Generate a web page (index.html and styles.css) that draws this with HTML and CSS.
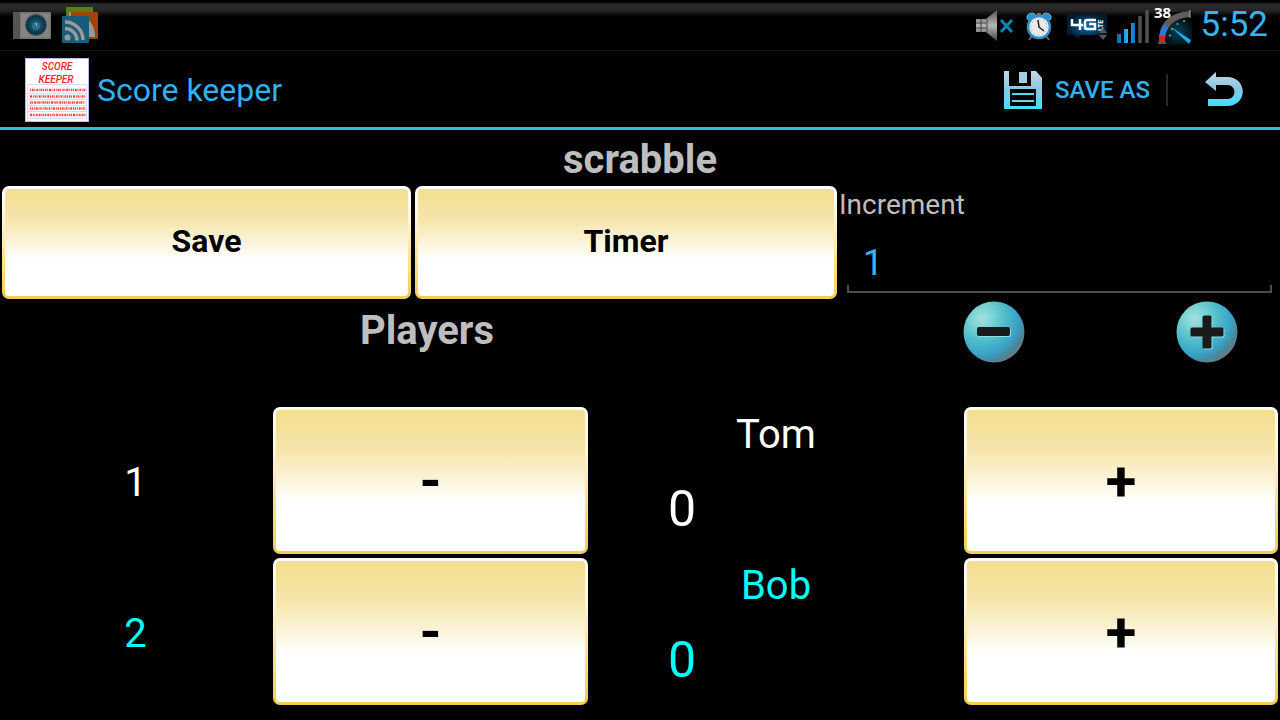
FILE: index.html
```html
<!DOCTYPE html>
<html lang="en">
<head>
<meta charset="utf-8">
<title>Score keeper</title>
<link rel="stylesheet" href="styles.css">
</head>
<body>
<svg class="defs" width="0" height="0" aria-hidden="true">
  <defs>
    <linearGradient id="ice" x1="0" y1="0" x2="0" y2="1"><stop offset="0" stop-color="#c3d7e6"/><stop offset=".45" stop-color="#8fc6e2"/><stop offset="1" stop-color="#3fe0ff"/></linearGradient>
    <linearGradient id="metal" x1="0" y1="0" x2="0" y2="1"><stop offset="0" stop-color="#555"/><stop offset=".5" stop-color="#b5b5b5"/><stop offset="1" stop-color="#444"/></linearGradient>
    <radialGradient id="lens"><stop offset="0" stop-color="#3b8296"/><stop offset=".45" stop-color="#135068"/><stop offset="1" stop-color="#0a2e3e"/></radialGradient>
    <radialGradient id="glow"><stop offset="0" stop-color="#0a70b8"/><stop offset="1" stop-color="#021a2c"/></radialGradient>
    <radialGradient id="haze" cx=".6" cy=".6" r=".55"><stop offset="0" stop-color="#02435a"/><stop offset="1" stop-color="#000"/></radialGradient>
    <linearGradient id="bar" x1="0" y1="0" x2="1" y2="0"><stop offset="0" stop-color="#0b66a8"/><stop offset=".6" stop-color="#2fb2ff"/><stop offset="1" stop-color="#0d6fb8"/></linearGradient>
    <radialGradient id="ball" cx=".3" cy=".27" r=".85"><stop offset="0" stop-color="#a4e0df"/><stop offset=".25" stop-color="#74d0d2"/><stop offset=".45" stop-color="#4fbdca"/><stop offset=".7" stop-color="#38a3c8"/><stop offset=".85" stop-color="#4d8497"/><stop offset="1" stop-color="#777"/></radialGradient>
  </defs>
</svg>

<header>
  <div class="status">
    <svg width="100" height="50" viewBox="0 0 100 50" role="img" aria-label="Notifications">
      <rect x="13" y="12" width="38" height="27" rx="1" fill="#777"/>
      <path d="M13 12h5v27h-5z" fill="#555"/><path d="M19 12v27" stroke="#333"/>
      <rect x="21" y="14" width="28" height="23" fill="#858585"/>
      <circle cx="36" cy="25" r="11" fill="#456"/><circle cx="36" cy="25" r="10" fill="url(#lens)"/>
      <circle cx="36" cy="26" r="4" fill="#2a6f83"/><path d="M35 23l2 0v4z" fill="#9bc"/>
      <rect x="66" y="7" width="27" height="22" rx="1" fill="#5c7d10"/>
      <rect x="69" y="12" width="29" height="27" rx="1" fill="#a24205"/>
      <path d="M70 12v6M89 22q5 6 5 14h-5z" stroke="#999" stroke-width="2" fill="#999"/>
      <rect x="62" y="16" width="27" height="27" rx="1" fill="#195b7b"/>
      <circle cx="67.500" cy="37.500" r="3" fill="#999"/>
      <path d="M65 28.500a12 12 0 0 1 12 12M65 22a18 18 0 0 1 18 18" fill="none" stroke="#999" stroke-width="3.500"/>
    </svg>
    <div class="tray">
      <svg width="225" height="50" viewBox="970 0 225 50" role="img" aria-label="Muted, alarm set, 4G LTE, signal, battery 38">
        <path d="M976 19h10l11-9v31l-11-9h-10z" fill="url(#metal)"/>
        <path d="M976 23h10m-10 5h10M981 19v13M987 19v13" stroke="#444"/>
        <path d="M1001 20l11 12m0-12l-11 12" stroke="#0b86b4" stroke-width="3"/>
        <path d="M1032 36l-3 4m17-4l3 4" stroke="#666" stroke-width="2"/>
        <path d="M1027 19q-1-6 6-6l3 2-6 6zM1051 19q1-6-6-6l-3 2 6 6z" fill="#2491d1" stroke="#9cd" stroke-width=".7"/>
        <path d="M1037 13h4v3h-4z" fill="#777"/>
        <circle cx="1039" cy="27" r="11" fill="#e9e9e9" stroke="#3191ca" stroke-width="2.500"/>
        <circle cx="1039" cy="27" r="8" fill="none" stroke="#999" stroke-dasharray="1 3.190"/>
        <path d="M1038 20l1 7 5 4" fill="none" stroke="#222" stroke-width="1.500"/>
        <path d="M1067 14h40v21h-26l-5 4-1-4h-8z" fill="url(#glow)"/>
        <path d="M1072 19v6h11m-3-6v11M1096 20h-9q-2 0-2 2v5q0 2 2 2h8v-5h-6" fill="none" stroke="#fff" stroke-width="2.500"/>
        <text class="lte" transform="translate(1103 31) rotate(-90)">LTE</text>
        <path d="M1099 33l4-5 4 5zm0 2h8l-4 5z" fill="#585858"/>
        <path d="M1117 34h4v9h-4zM1124 29h4v14h-4zM1131 23h4v20h-4z" fill="url(#bar)"/>
        <path d="M1138 16h4v27h-4zM1145 10h4v33h-4z" fill="#3d3d3d"/>
        <path d="M1140 16v27M1147 10v33" stroke="#666"/>
        <rect x="1157" y="12" width="35" height="33" fill="url(#haze)"/>
        <path d="M1162 42q0-26 28-28" fill="none" stroke="#625d5b" stroke-width="6"/>
        <path d="M1162 36q1-6 4-10" fill="none" stroke="#287bd7" stroke-width="6"/>
        <path d="M1162 42v-6" stroke="#da2020" stroke-width="6"/>
        <path d="M1158 43h8M1190 10v8" stroke="#aaa"/>
        <path d="M1169 35l2 1m0-8l2 2m4-7l1 2m6-5v2" stroke="#777" stroke-width="2"/>
        <path d="M1171 27l20 13-2 4z" fill="#15adf6"/>
        <text class="charge" x="1154" y="18">38</text>
      </svg>
      <time class="clock">5:52</time>
    </div>
  </div>
  <div class="actionbar">
    <svg width="64" height="64" viewBox="0 0 64 64" role="img" aria-label="Score keeper logo">
      <rect x=".5" y=".5" width="63" height="63" fill="#fff" stroke="#b9b4f0"/>
      <g class="logo-title"><text x="32" y="12">SCORE</text><text x="31" y="25">KEEPER</text></g>
      <path d="M2.500 64V26.500h59V64M2 35.500h60M2 41.500h60M2 47.500h60M2 53.500h60M2 60.500h60" fill="none" stroke="#dcd9fa"/>
      <g fill="none" stroke="#f44" stroke-width="2.400">
        <path d="M5 32h56" stroke-dasharray="1 .8 2 .6 1 1 1.500 .7"/>
        <path d="M5 38.500h56" stroke-dasharray="2 .7 1 .8 1.500 .6 1 1"/>
        <path d="M5 44.500h55" stroke-dasharray="1.500 .6 1 1 2 .7 1 .6"/>
        <path d="M5 50.500h56" stroke-dasharray="1 .6 1.500 1 1 .7 2 .8"/>
        <path d="M5 57h56" stroke-dasharray="2 .8 1 .6 1 .7 1.500 1"/>
      </g>
    </svg>
    <h1>Score keeper</h1>
    <button class="action save-as" type="button">
      <svg width="40" height="40" viewBox="0 0 40 40" aria-hidden="true">
        <path fill="url(#ice)" fill-rule="evenodd" d="M1 1h5v15h22V1h5l6 7v31H1zM16 3v10h8V3zM7 19v17h26V19z"/>
        <path fill="#000" d="M6 1h22v14H6z"/><path fill="#a9cbe0" d="M16 2h8v11h-8z"/>
        <path stroke="#5bd9f3" stroke-width="2" d="M9 24h22M9 31h22"/>
      </svg>
      <span>SAVE AS</span>
    </button>
    <button class="action undo" type="button" aria-label="Undo">
      <svg width="40" height="36" viewBox="0 0 40 36" aria-hidden="true">
        <path fill="url(#ice)" d="M1 10L12 0v5h11c21 0 21 29 0 29H4v-7h19c10 0 10-14 0-14H12v6z"/>
      </svg>
    </button>
  </div>
</header>

<main>
  <h2 class="game">scrabble</h2>
  <div class="controls">
    <button class="key" type="button">Save</button>
    <button class="key" type="button">Timer</button>
    <div class="increment">
      <label for="step">Increment</label>
      <input id="step" type="text" inputmode="numeric" value="1">
    </div>
  </div>
  <div class="players-head">
    <h2>Players</h2>
    <button class="round" type="button" aria-label="Remove player">
      <svg width="62" height="62" viewBox="0 0 62 62" aria-hidden="true"><circle cx="31" cy="31" r="30.500" fill="url(#ball)"/><rect x="15" y="27" width="33" height="9" rx="2" fill="#8de1e5"/><rect x="14" y="26" width="33" height="9" rx="2" fill="#1b1b1b"/></svg>
    </button>
    <button class="round" type="button" aria-label="Add player">
      <svg width="62" height="62" viewBox="0 0 62 62" aria-hidden="true"><circle cx="31" cy="31" r="30.500" fill="url(#ball)"/><path d="M28 16h6v12h12v6H34v12h-6V34H16v-6h12z" transform="translate(1 1)" fill="#8de1e5" stroke="#8de1e5" stroke-width="3" stroke-linejoin="round"/><path d="M28 16h6v12h12v6H34v12h-6V34H16v-6h12z" fill="#1b1b1b" stroke="#1b1b1b" stroke-width="3" stroke-linejoin="round"/></svg>
    </button>
  </div>
  <section class="player">
    <span class="rank">1</span>
    <button class="key sign" type="button" aria-label="Decrease Tom">-</button>
    <div class="who"><span class="name">Tom</span><span class="score">0</span></div>
    <button class="key sign" type="button" aria-label="Increase Tom">+</button>
  </section>
  <section class="player active">
    <span class="rank">2</span>
    <button class="key sign" type="button" aria-label="Decrease Bob">-</button>
    <div class="who"><span class="name">Bob</span><span class="score">0</span></div>
    <button class="key sign" type="button" aria-label="Increase Bob">+</button>
  </section>
</main>
</body>
</html>
```
FILE: styles.css
```css
* { box-sizing: border-box; }
body {
  margin: 0;
  background: #000;
  color: #fff;
  font-family: Roboto, "Liberation Sans", sans-serif;
}
button, input { font: inherit; color: inherit; border: 0; background: none; padding: 0; }
h1, h2 { margin: 0; }
svg { display: block; flex: none; }
.defs { position: absolute; }

.status {
  display: flex;
  justify-content: space-between;
  height: 51px;
  border-bottom: 1px solid #141414;
  background: linear-gradient(#000 2px, #2b2b2b 4px, #262626 10px, #000 17px);
}
.tray { display: flex; padding-right: 12px; gap: 6px; }
.clock { color: #33b5f5; font-size: 35px; line-height: 50px; }
.lte { fill: #fff; font-size: 7px; font-weight: 700; }
.charge { fill: #fff; font: 700 15px "Open Sans", sans-serif; }

.actionbar {
  display: flex;
  align-items: center;
  height: 79px;
  padding: 2px 24px 0 25px;
  border-bottom: 3px solid #33b5e5;
  color: #33b0f0;
}
.logo-title {
  fill: #f22;
  font: italic 500 10px Roboto, sans-serif;
  text-anchor: middle;
}
h1 { flex: 1; margin-left: 8px; font-size: 32px; font-weight: 400; line-height: 40px; }
.action { display: flex; align-items: center; }
.save-as {
  gap: 12px;
  height: 32px;
  padding-right: 16px;
  border-right: 2px solid #282828;
  font-size: 24px;
  font-weight: 500;
}
.undo { padding: 0 12px 0 36px; }

h2 { color: #bebebe; font-size: 40px; line-height: 60px; text-align: center; }
.game { height: 54px; }
.controls {
  display: grid;
  grid-template-columns: minmax(0, 413fr) minmax(0, 426fr) minmax(0, 441fr);
}
.key {
  margin: 2px;
  border: 3px solid transparent;
  border-radius: 7px;
  background:
    linear-gradient(#f4de8e, #f6e6ae 30%, #fff 66%) padding-box,
    linear-gradient(#fff, #fff3d0 35%, #fbdf83 70%, #f2cd4c) border-box;
  color: #000;
  font-size: 32px;
  font-weight: 700;
}
.controls .key { height: 113px; padding-bottom: 4px; }
.increment { display: flex; flex-direction: column; color: #bebebe; }
.increment label { font-size: 28px; line-height: 42px; }
.increment input {
  height: 60px;
  margin: 7px 8px 0;
  padding: 0 16px;
  min-width: 0;
  color: #33b5f5;
  font-size: 36px;
  background:
    linear-gradient(#4d4d4d, #4d4d4d) left bottom / 2px 8px no-repeat,
    linear-gradient(#4d4d4d, #4d4d4d) right bottom / 2px 8px no-repeat,
    linear-gradient(#4d4d4d, #4d4d4d) bottom / 100% 2px no-repeat;
}
.players-head {
  display: grid;
  grid-template-columns: 854fr 280fr 146fr;
  align-items: start;
  height: 104px;
}
.round { justify-self: center; border-radius: 50%; }

.player { display: grid; grid-template-columns: 271fr 319fr 372fr 318fr; height: 151px; }
.player.active { color: #0ff; }
.rank { align-self: center; padding-top: 4px; text-align: center; font-size: 40px; }
.player .sign { font-size: 56px; }
.who { display: flex; flex-direction: column; }
.name { text-align: center; font-size: 40px; line-height: 60px; }
.score { padding-left: 78px; font-size: 50px; line-height: 88px; }
```
